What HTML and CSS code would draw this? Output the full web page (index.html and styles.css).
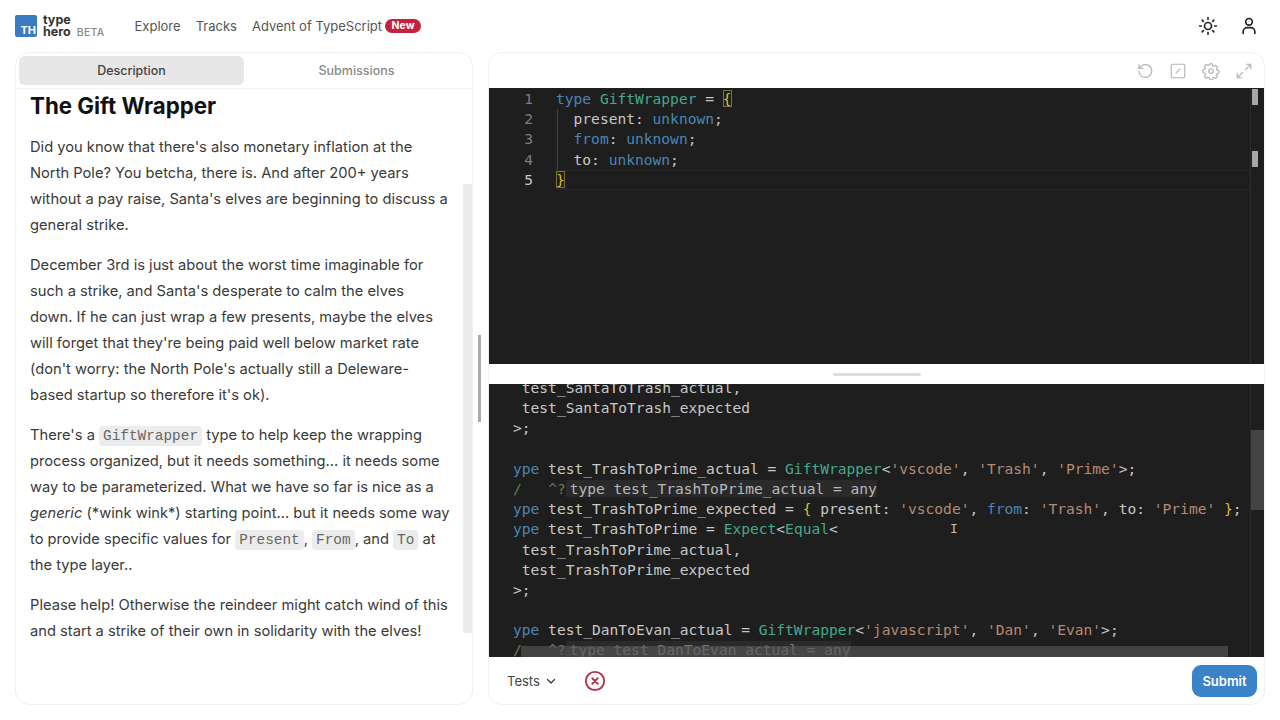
FILE: index.html
```html
<!DOCTYPE html>
<html lang="en">
<head>
    <meta charset="UTF-8">
    <title>The Gift Wrapper - Type Hero</title>
    <link rel="stylesheet" href="styles.css">
</head>
<body>
    <header class="topbar">
        <div class="logo">
            <div class="logo-mark"><span>TH</span></div>
            <div class="logo-text">type<br>hero</div>
            <div class="logo-beta">BETA</div>
        </div>
        <nav class="nav">
            <a>Explore</a>
            <a>Tracks</a>
            <a>Advent of TypeScript</a>
            <span class="badge">New</span>
        </nav>
        <div class="top-icons">
            <svg width="20" height="20" viewBox="0 0 24 24" fill="none" stroke="#222" stroke-width="2" stroke-linecap="round">
                <circle cx="12" cy="12" r="4.2"/>
                <path d="M12 2v2M12 20v2M2 12h2M20 12h2M5 5l1.4 1.4M17.6 17.6L19 19M5 19l1.4-1.4M17.6 6.4L19 5"/>
            </svg>
            <svg width="20" height="20" viewBox="0 0 24 24" fill="none" stroke="#222" stroke-width="2" stroke-linecap="round">
                <circle cx="12" cy="7" r="4"/>
                <path d="M5 21v-2a5 5 0 0 1 5-5h4a5 5 0 0 1 5 5v2"/>
            </svg>
        </div>
    </header>

    <main class="layout">
        <section class="panel left">
            <div class="tabs">
                <div class="tab active">Description</div>
                <div class="tab">Submissions</div>
            </div>
            <div class="desc-wrap">
                <article class="desc">
                    <h1>The Gift Wrapper</h1>
                    <p>Did you know that there's also monetary inflation at the North Pole? You betcha, there is. And after 200+ years without a pay raise, Santa's elves are beginning to discuss a general strike.</p>
                    <p>December 3rd is just about the worst time imaginable for such a strike, and Santa's desperate to calm the elves down. If he can just wrap a few presents, maybe the elves will forget that they're being paid well below market rate (don't worry: the North Pole's actually still a Deleware-based startup so therefore it's ok).</p>
                    <p>There's a <code>GiftWrapper</code> type to help keep the wrapping process organized, but it needs something... it needs some way to be parameterized. What we have so far is nice as a <em>generic</em> (*wink wink*) starting point... but it needs some way to provide specific values for <code>Present</code>, <code>From</code>, and <code>To</code> at the type layer..</p>
                    <p>Please help! Otherwise the reindeer might catch wind of this and start a strike of their own in solidarity with the elves!</p>
                </article>
                <div class="desc-track"></div>
            </div>
        </section>

        <div class="gutter"><div class="gutter-handle"></div></div>

        <section class="panel right">
            <div class="toolbar">
                <svg width="18" height="18" viewBox="0 0 24 24" fill="none" stroke="#b5b5b5" stroke-width="1.6" stroke-linecap="round" stroke-linejoin="round">
                    <path d="M4 12a8.5 8.5 0 1 0 2.6-6.1L4 8.4"/>
                    <path d="M4 3.5v5h5"/>
                </svg>
                <svg width="18" height="18" viewBox="0 0 24 24" fill="none" stroke="#b5b5b5" stroke-width="1.6" stroke-linecap="round" stroke-linejoin="round">
                    <rect x="3" y="3" width="18" height="18" rx="2"/>
                    <path d="M9.5 14.5l5-5"/>
                </svg>
                <svg width="18" height="18" viewBox="0 0 24 24" fill="none" stroke="#b5b5b5" stroke-width="1.6" stroke-linecap="round" stroke-linejoin="round">
                    <path d="M10.3 3h3.4l.5 2.6 1.9.8 2.2-1.5 2.4 2.4-1.5 2.2.8 1.9 2.6.5v3.4l-2.6.5-.8 1.9 1.5 2.2-2.4 2.4-2.2-1.5-1.9.8-.5 2.6h-3.4l-.5-2.6-1.9-.8-2.2 1.5-2.4-2.4 1.5-2.2-.8-1.9L1.2 14v-3.4l2.6-.5.8-1.9L3.1 6l2.4-2.4 2.2 1.5 1.9-.8z" transform="translate(0 -.5)"/>
                    <circle cx="12" cy="12" r="3"/>
                </svg>
                <svg width="18" height="18" viewBox="0 0 24 24" fill="none" stroke="#b5b5b5" stroke-width="1.6" stroke-linecap="round" stroke-linejoin="round">
                    <path d="M14 10l7-7M15 3h6v6M10 14l-7 7M3 15v6h6"/>
                </svg>
            </div>

            <div class="editor editor-top">
                <div class="code-area">
                    <div class="numbers">
                        <div>1</div><div>2</div><div>3</div><div>4</div><div class="current">5</div>
                    </div>
                    <div class="lines">
                        <div class="indent-guide"></div>
                        <div class="line"><span class="kw">type</span> <span class="ty">GiftWrapper</span> = <span class="match">{</span></div>
                        <div class="line">  present: <span class="kw">unknown</span>;</div>
                        <div class="line">  <span class="kw">from</span>: <span class="kw">unknown</span>;</div>
                        <div class="line">  to: <span class="kw">unknown</span>;</div>
                        <div class="line line-current"><span class="match">}</span></div>
                    </div>
                </div>
                <div class="side-bar">
                    <div class="thumb thumb-a"></div>
                    <div class="thumb thumb-b"></div>
                </div>
            </div>

            <div class="splitter"><div class="splitter-handle"></div></div>

            <div class="editor editor-bottom">
                <div class="code-area">
                    <div class="lines scrolled">
                        <div class="line"> test_SantaToTrash_actual,</div>
                        <div class="line"> test_SantaToTrash_expected</div>
                        <div class="line">&gt;;</div>
                        <div class="line">&nbsp;</div>
                        <div class="line"><span class="kw">ype</span> test_TrashToPrime_actual = <span class="ty">GiftWrapper</span>&lt;<span class="str">'vscode'</span>, <span class="str">'Trash'</span>, <span class="str">'Prime'</span>&gt;;</div>
                        <div class="line"><span class="cm">/</span>   <span class="cm">^?</span><span class="inlay">type test_TrashToPrime_actual = any</span></div>
                        <div class="line"><span class="kw">ype</span> test_TrashToPrime_expected = <span class="brace">{</span> present: <span class="str">'vscode'</span>, <span class="kw">from</span>: <span class="str">'Trash'</span>, to: <span class="str">'Prime'</span> <span class="brace">}</span>;</div>
                        <div class="line"><span class="kw">ype</span> test_TrashToPrime = <span class="ty">Expect</span>&lt;<span class="ty">Equal</span>&lt;</div>
                        <div class="line"> test_TrashToPrime_actual,</div>
                        <div class="line"> test_TrashToPrime_expected</div>
                        <div class="line">&gt;;</div>
                        <div class="line">&nbsp;</div>
                        <div class="line"><span class="kw">ype</span> test_DanToEvan_actual = <span class="ty">GiftWrapper</span>&lt;<span class="str">'javascript'</span>, <span class="str">'Dan'</span>, <span class="str">'Evan'</span>&gt;;</div>
                        <div class="line"><span class="cm">/</span>   <span class="cm">^?</span><span class="inlay dim">type test_DanToEvan_actual = any</span></div>
                    </div>
                </div>
                <div class="side-bar">
                    <div class="thumb-wide"></div>
                </div>
                <div class="h-scroll"></div>
                <div class="text-cursor">I</div>
            </div>

            <div class="footer">
                <button class="tests-btn">Tests
                    <svg width="12" height="12" viewBox="0 0 24 24" fill="none" stroke="#333" stroke-width="2.4" stroke-linecap="round" stroke-linejoin="round"><path d="M5 9l7 7 7-7"/></svg>
                </button>
                <svg class="fail-icon" width="22" height="22" viewBox="0 0 24 24" fill="none" stroke="#b5304a" stroke-width="2" stroke-linecap="round">
                    <circle cx="12" cy="12" r="10"/>
                    <path d="M9 9l6 6M15 9l-6 6"/>
                </svg>
                <button class="submit">Submit</button>
            </div>
        </section>
    </main>
</body>
</html>
```

FILE: styles.css
```css
* {
    box-sizing: border-box;
}

body {
    margin: 0;
    width: 1280px;
    height: 720px;
    overflow: hidden;
    background: #fff;
    color: #333;
    font-family: Inter, "Liberation Sans", sans-serif;
    display: flex;
    flex-direction: column;
}

.topbar {
    height: 52px;
    flex: none;
    display: flex;
    align-items: center;
    padding: 0 21px 0 15px;
}

.logo {
    display: flex;
    align-items: center;
}

.logo-mark {
    width: 22px;
    height: 22px;
    background: #3b7cc0;
    border-radius: 2px;
    display: flex;
    align-items: flex-end;
    justify-content: flex-end;
    color: #fff;
    font-size: 11px;
    font-weight: 700;
    line-height: 13px;
    padding-right: 1px;
}

.logo-text {
    margin-left: 6px;
    font-size: 12.5px;
    font-weight: 700;
    line-height: 12px;
    color: #333;
}

.logo-beta {
    margin: 12px 0 0 6px;
    font-size: 10.5px;
    font-weight: 500;
    letter-spacing: 0.3px;
    color: #888;
}

.nav {
    display: flex;
    align-items: center;
    margin-left: 30px;
    font-size: 13px;
    color: #555;
    gap: 15px;
}

.badge {
    margin-left: -12px;
    width: 36px;
    height: 14px;
    border-radius: 7px;
    background: #c4213c;
    color: #fff;
    font-size: 10.5px;
    font-weight: 700;
    line-height: 14px;
    text-align: center;
}

.top-icons {
    margin-left: auto;
    display: flex;
    gap: 21px;
}

.layout {
    flex: 1;
    min-height: 0;
    display: flex;
    padding: 0 15px 15px;
}

.panel {
    border: 1px solid #f0f0f0;
    border-radius: 14px;
    overflow: hidden;
    display: flex;
    flex-direction: column;
}

.left {
    width: 458px;
    flex: none;
}

.right {
    flex: 1;
    min-width: 0;
}

.tabs {
    height: 36px;
    flex: none;
    display: flex;
    padding: 3px;
    border-bottom: 1px solid #f4f4f4;
    font-size: 12.5px;
}

.tab {
    flex: 1;
    display: flex;
    align-items: center;
    justify-content: center;
    border-radius: 6px;
    color: #8a8a8a;
    font-weight: 500;
}

.tab.active {
    background: #e7e7e7;
    color: #444;
}

.desc-wrap {
    flex: 1;
    min-height: 0;
    display: flex;
    padding-left: 14px;
}

.desc {
    width: 420px;
    flex: none;
    font-size: 14.7px;
    line-height: 26px;
    color: #3a3a3a;
}

.desc h1 {
    margin: 1px 0 12px;
    font-size: 22.3px;
    line-height: 32px;
    font-weight: 700;
    color: #111;
}

.desc p {
    margin: 0 0 14px;
}

.desc code {
    font-family: "Liberation Mono", monospace;
    font-size: 14.4px;
    line-height: 1;
    color: #666;
    background: #ececec;
    border-radius: 4px;
    padding: 2px 4px;
}

.desc-track {
    width: 9px;
    height: 449px;
    margin: 95px 0 0 auto;
    background: #ececec;
}

.gutter {
    width: 15px;
    flex: none;
    position: relative;
}

.gutter-handle {
    position: absolute;
    left: 5px;
    top: 283px;
    width: 3px;
    height: 87px;
    background: #aaa;
}

.toolbar {
    height: 35px;
    flex: none;
    display: flex;
    align-items: center;
    justify-content: flex-end;
    gap: 15px;
    padding-right: 11px;
}

.editor {
    position: relative;
    display: flex;
    background: #1e1e1e;
    color: #c8c8c8;
    font-family: "DejaVu Sans Mono", monospace;
    font-size: 14.58px;
    line-height: 20.2px;
    overflow: hidden;
}

.editor-top {
    height: 276px;
    flex: none;
    padding-top: 1px;
}

.editor-bottom {
    flex: 1;
    min-height: 0;
}

.code-area {
    flex: 1;
    min-width: 0;
    display: flex;
}

.numbers {
    width: 44px;
    margin-right: 23px;
    text-align: right;
    color: #7d7d7d;
}

.numbers .current {
    color: #c6c6c6;
}

.lines {
    flex: 1;
    position: relative;
}

.line {
    height: 20.2px;
    white-space: pre;
}

.line-current {
    box-shadow: inset 0 1px #282828, inset 0 -1px #282828;
}

.indent-guide {
    position: absolute;
    left: 1px;
    top: 20px;
    width: 1px;
    height: 61px;
    background: #444;
}

.scrolled {
    margin: -6px 0 0 24px;
}

.kw {
    color: #4a86b5;
}

.ty {
    color: #45a98c;
}

.str {
    color: #b58a75;
}

.cm {
    color: #5f8050;
}

.brace {
    color: #d8bb2e;
}

.match {
    color: #d8bb2e;
    outline: 1px solid #77773c;
    outline-offset: -1px;
}

.inlay {
    padding-left: 4px;
    background: #2a2a2a;
    color: #b8b8b8;
}

.inlay.dim {
    color: #777;
}

.side-bar {
    width: 14px;
    flex: none;
    position: relative;
    border-left: 1px solid #2c2c2c;
}

.thumb {
    position: absolute;
    left: 1px;
    width: 6px;
    height: 16px;
    background: #a8a8a8;
}

.thumb-a {
    top: 0;
}

.thumb-b {
    top: 62px;
}

.thumb-wide {
    position: absolute;
    left: 0;
    right: 0;
    top: 46px;
    height: 80px;
    background: #444;
}

.h-scroll {
    position: absolute;
    left: 32px;
    width: 707px;
    bottom: 0;
    height: 11px;
    background: rgba(90, 90, 90, 0.6);
}

.text-cursor {
    position: absolute;
    left: 461px;
    top: 135px;
    color: #bbb;
    font-size: 13px;
}

.splitter {
    height: 20px;
    flex: none;
    display: flex;
    align-items: center;
    justify-content: center;
}

.splitter-handle {
    width: 88px;
    height: 3px;
    background: #ddd;
    border-radius: 2px;
}

.footer {
    height: 47px;
    flex: none;
    display: flex;
    align-items: center;
    padding: 0 7px 0 18px;
}

.footer button {
    border: none;
    font-family: inherit;
    font-size: 13px;
}

.tests-btn {
    background: none;
    color: #444;
    padding: 0;
    display: flex;
    align-items: center;
    gap: 5px;
}

.fail-icon {
    margin-left: 27px;
}

.submit {
    margin-left: auto;
    width: 65px;
    height: 32px;
    border-radius: 9px;
    background: #3b82c9;
    color: #fff;
    font-weight: 600;
}
```
